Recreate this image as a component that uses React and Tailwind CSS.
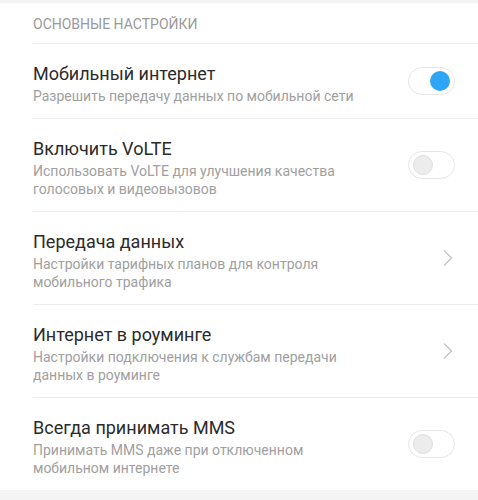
import React from "react";

const rows = [
  { title: "Мобильный интернет", sub: "Разрешить передачу данных по мобильной сети", type: "on" },
  { title: "Включить VoLTE", sub: "Использовать VoLTE для улучшения качества\nголосовых и видеовызовов", type: "off" },
  { title: "Передача данных", sub: "Настройки тарифных планов для контроля\nмобильного трафика", type: "link" },
  { title: "Интернет в роуминге", sub: "Настройки подключения к службам передачи\nданных в роуминге", type: "link" },
  { title: "Всегда принимать MMS", sub: "Принимать MMS даже при отключенном\nмобильном интернете", type: "off" },
];

function Toggle({ on }) {
  return (
    <div className="w-[47px] h-[28px] rounded-full border border-[#e6e6e6] bg-white flex items-center px-[4px] shrink-0">
      {on ? (
        <div className="ml-auto w-[20px] h-[20px] rounded-full bg-[#2fa6f5]" />
      ) : (
        <div className="w-[20px] h-[20px] rounded-full bg-[#ececec] border border-[#e0e0e0]" />
      )}
    </div>
  );
}

function Chevron() {
  return (
    <svg width="12" height="18" viewBox="0 0 12 18" className="mr-[1px] shrink-0">
      <path d="M2 1.5 L9.5 9 L2 16.5" fill="none" stroke="#c4c4c4" strokeWidth="1.4" />
    </svg>
  );
}

export default function App() {
  return (
    <div className="w-[478px] h-[500px] bg-[#f4f4f4] overflow-hidden" style={{ fontFamily: "Roboto, 'Noto Sans', sans-serif" }}>
      <div className="h-[3px]" />
      <div className="bg-white pl-[33px] h-[487px]">
        <div className="pt-[11px] pb-[9px] border-b border-[#ededed] text-[14px] leading-[20px] text-[#9a9a9a]">
          ОСНОВНЫЕ НАСТРОЙКИ
        </div>
        {rows.map((r, i) => (
          <div
            key={r.title}
            className={`flex items-center pr-[23px] ${i < rows.length - 1 ? "border-b border-[#ededed]" : ""}`}
          >
            <div className="flex-1 pt-[18px] pb-[13px]">
              <div className="text-[18px] leading-[24px] text-[#2b2b2b]">{r.title}</div>
              <div className="mt-[1px] text-[14px] leading-[18px] text-[#a0a0a0] whitespace-pre-line">{r.sub}</div>
            </div>
            {r.type === "link" ? <Chevron /> : <Toggle on={r.type === "on"} />}
          </div>
        ))}
      </div>
    </div>
  );
}
